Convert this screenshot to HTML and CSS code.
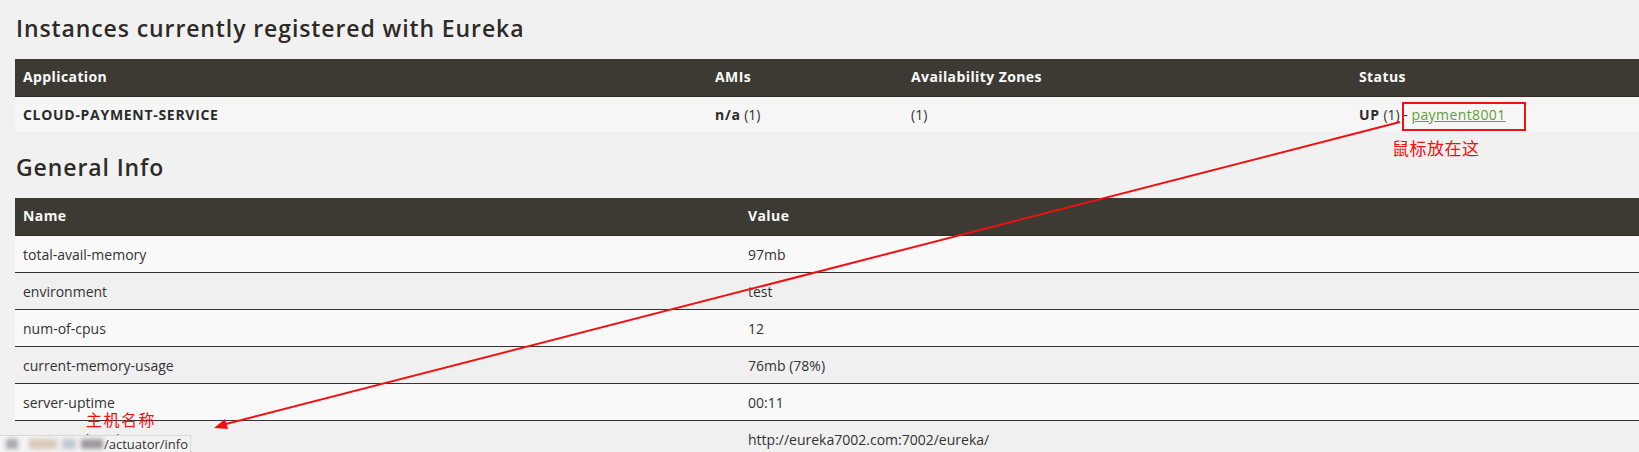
FILE: index.html
```html
<!DOCTYPE html>
<html>
<head>
<meta charset="utf-8">
<link rel="stylesheet" href="styles.css">
</head>
<body>
<div class="page">
  <h1 class="title">Instances currently registered with Eureka</h1>
  <table class="grid apps">
    <colgroup>
      <col class="c-app"><col class="c-ami"><col class="c-az"><col class="c-status">
    </colgroup>
    <thead>
      <tr><th>Application</th><th>AMIs</th><th>Availability Zones</th><th>Status</th></tr>
    </thead>
    <tbody>
      <tr>
        <td><b>CLOUD-PAYMENT-SERVICE</b></td>
        <td><b>n/a</b> (1)</td>
        <td>(1)</td>
        <td><b>UP</b> (1) - <a class="inst" href="#">payment8001</a></td>
      </tr>
    </tbody>
  </table>

  <h1 class="title second">General Info</h1>
  <table class="grid info">
    <colgroup>
      <col class="c-name"><col class="c-value">
    </colgroup>
    <thead>
      <tr><th>Name</th><th>Value</th></tr>
    </thead>
    <tbody>
      <tr><td>total-avail-memory</td><td>97mb</td></tr>
      <tr><td>environment</td><td>test</td></tr>
      <tr><td>num-of-cpus</td><td>12</td></tr>
      <tr><td>current-memory-usage</td><td>76mb (78%)</td></tr>
      <tr><td>server-uptime</td><td>00:11</td></tr>
      <tr><td>registered-replicas</td><td>http://eureka7002.com:7002/eureka/</td></tr>
    </tbody>
  </table>
</div>

<svg class="annot" width="1639" height="452" viewBox="0 0 1639 452">
  <rect x="1403" y="103" width="122" height="27" fill="none" stroke="#f01010" stroke-width="2"/>
  <line x1="1400" y1="122" x2="222" y2="425" stroke="#f01010" stroke-width="2"/>
  <polygon points="214,428 225,419 228,429" fill="#f01010"/>
</svg>
<div class="note note-hover">鼠标放在这</div>
<div class="note note-host">主机名称</div>

<div class="statusbar">
  <span class="blur b1"></span><span class="blur b2"></span><span class="blur b3"></span><span class="blur b4"></span><span class="url">/actuator/info</span>
</div>
</body>
</html>
```

FILE: styles.css
```css
html, body {
  margin: 0;
  padding: 0;
  background: #f1f1f1;
}
body {
  width: 1639px;
  height: 452px;
  overflow: hidden;
  position: relative;
  font-family: "Open Sans", "Noto Sans", sans-serif;
  font-size: 14px;
  color: #333;
}
.page {
  padding-left: 15px;
}
.title {
  margin: 0;
  padding-top: 14px;
  height: 59px;
  box-sizing: border-box;
  font-family: "Open Sans", sans-serif;
  font-weight: 600;
  font-size: 23px;
  line-height: 28px;
  letter-spacing: 0.9px;
  color: #2e2b27;
  padding-left: 1px;
}
.title.second {
  padding-top: 21px;
  height: 66px;
}
.grid {
  width: 1624px;
  border-collapse: collapse;
  table-layout: fixed;
}
.grid th {
  background: #3d3a34;
  color: #fafafa;
  font-weight: 700;
  letter-spacing: 0.4px;
  text-align: left;
  padding: 0 8px 3px;
  height: 34px;
  border-bottom: 1px solid #2e2b27;
}
.grid td {
  padding: 0 8px;
  height: 35px;
}
.grid td b {
  letter-spacing: 0.7px;
}
.apps td {
  background: #f6f6f6;
}
.apps b { color: #2b2b2b; }
.c-app { width: 692px; }
.c-ami { width: 196px; }
.c-az { width: 448px; }
.c-status { width: 288px; }
.c-name { width: 725px; }
.info td {
  height: 36px;
  border-bottom: 1px solid #333;
}
.info tbody tr:nth-child(odd) td { background: #f9f9f9; }
.info tbody tr:nth-child(even) td { background: #f0f0f0; }
.inst {
  color: #5fa134;
  text-decoration: underline;
  letter-spacing: 0.4px;
}
.annot {
  position: absolute;
  top: 0;
  left: 0;
  pointer-events: none;
}
.note {
  position: absolute;
  color: #f01010;
  font-family: "Noto Sans CJK SC", sans-serif;
  line-height: 1;
}
.note-hover {
  left: 1392px;
  top: 139px;
  font-size: 17px;
  letter-spacing: 0.5px;
}
.note-host {
  left: 86px;
  top: 411px;
  font-size: 16px;
  letter-spacing: 1.5px;
}
.statusbar {
  position: absolute;
  left: 0;
  bottom: 0;
  width: 191px;
  height: 17px;
  background: #f3f3f3;
  border-top: 1px solid #d9d9d9;
  border-right: 1px solid #d9d9d9;
  display: flex;
  align-items: center;
  padding-left: 6px;
  box-sizing: border-box;
  font-family: "Open Sans", sans-serif;
  font-size: 13px;
  color: #333;
}
.blur {
  display: inline-block;
  height: 10px;
  background: #a9a9b0;
  filter: blur(2px);
  margin-right: 5px;
}
.b1 { width: 12px; }
.b2 { width: 28px; background: #d8c8b8; margin-left: 6px; }
.b3 { width: 14px; background: #c0c6d0; }
.b4 { width: 22px; background: #9d9b9e; margin-right: 1px; }
.url { white-space: nowrap; }
```
